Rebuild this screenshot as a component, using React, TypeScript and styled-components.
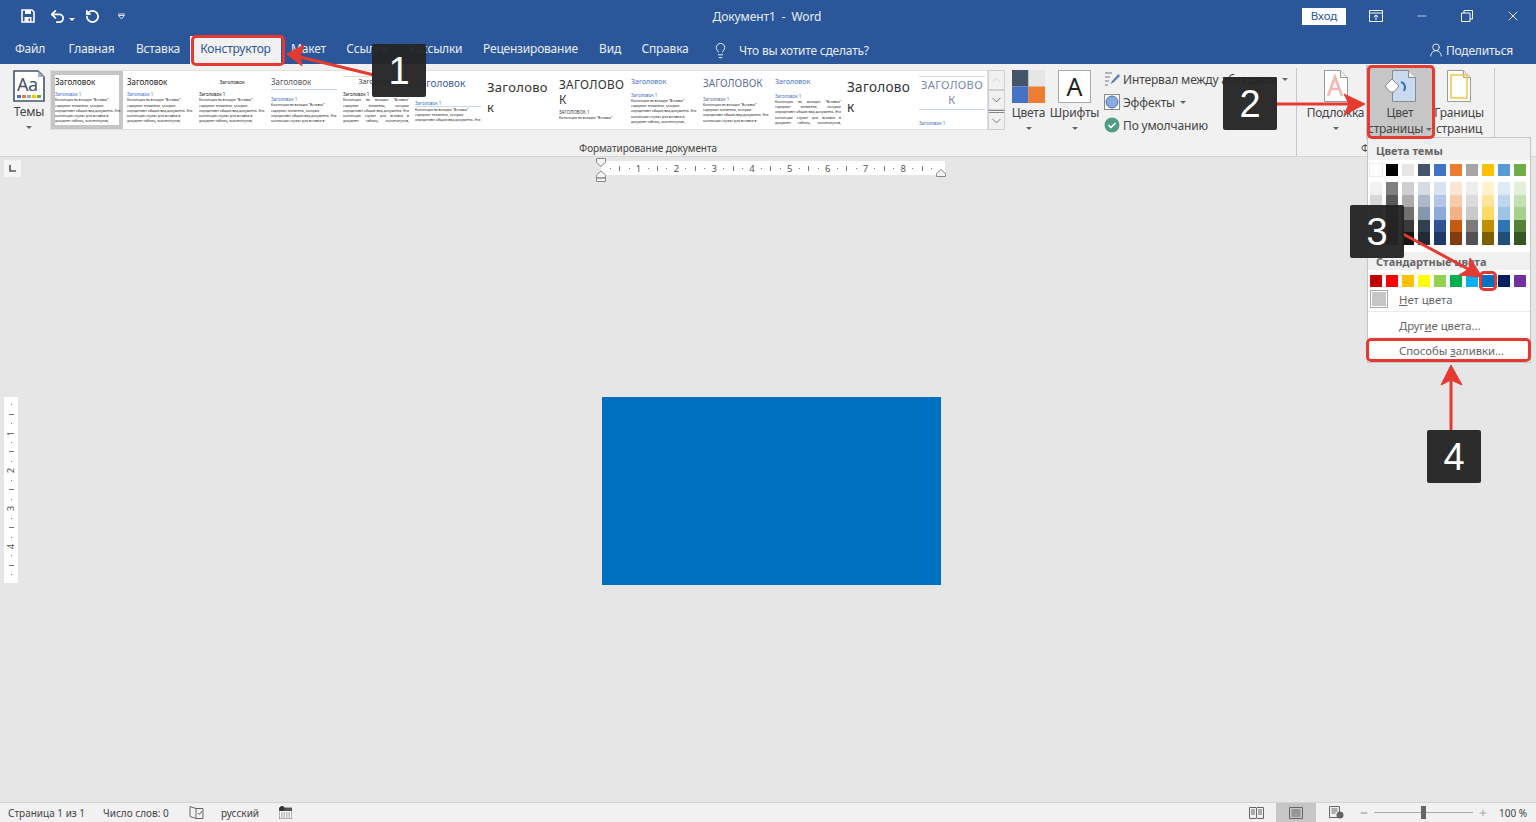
import styled, { createGlobalStyle } from "styled-components";
import { Undo2, RotateCcw, Lightbulb, UserRound, Minus, Plus, X, ChevronUp, ChevronDown } from "lucide-react";

const Global = createGlobalStyle`
  html, body { margin: 0; padding: 0; height: 100%; overflow: hidden; }
  body { font-family: "Noto Sans", "Open Sans", sans-serif; background: #e6e6e6; }
  #root { height: 100%; }
`;

const TABS = [
  { name: "Файл", width: 54 },
  { name: "Главная", width: 69 },
  { name: "Вставка", width: 64 },
  { name: "Конструктор", width: 91 },
  { name: "Макет", width: 55 },
  { name: "Ссылки", width: 63 },
  { name: "Рассылки", width: 73 },
  { name: "Рецензирование", width: 117 },
  { name: "Вид", width: 42 },
  { name: "Справка", width: 68 },
];

const BODY = "Коллекция на вкладке \"Вставка\" содержит элементы, которые определяют общий вид документа. Эти коллекции служат для вставки в документ таблиц, колонтитулов, списков, титульных страниц и других";

type Card = {
  title: string;
  size: number;
  color?: string;
  align?: string;
  lineHeight?: number;
  accent?: string;
  rule?: boolean;
  head?: string;
  headColor?: string;
  headRule?: boolean;
  gap?: number;
  lines?: number;
  justify?: boolean;
  selected?: boolean;
};

const CARDS: Card[] = [
  { title: "Заголовок", size: 8, head: "Заголовок 1", headColor: "#4472c4", lines: 5, selected: true },
  { title: "Заголовок", size: 8, head: "Заголовок 1", headColor: "#4472c4", lines: 5 },
  { title: "Заголовок", size: 5, align: "center", head: "Заголовок 1", headColor: "#222", lines: 5 },
  { title: "Заголовок", size: 8, color: "#555", head: "Заголовок 1", headColor: "#4472c4", rule: true, gap: 6, lines: 4 },
  { title: "Заголовок", size: 7, align: "center", color: "#444", accent: "#cfe3bd", head: "Заголовок 1", headColor: "#222", lines: 5, justify: true },
  { title: "Заголовок", size: 10, color: "#44629c", head: "Заголовок 1", headColor: "#4472c4", headRule: true, gap: 10, lines: 3 },
  { title: "Заголовок", size: 13, color: "#333", lineHeight: 20 },
  { title: "ЗАГОЛОВОК", size: 11.8, color: "#333", head: "ЗАГОЛОВОК 1", headColor: "#333", gap: 1.5, lines: 1 },
  { title: "Заголовок", size: 7, color: "#4472c4", head: "Заголовок 1", headColor: "#4472c4", gap: 4.6, lines: 5 },
  { title: "ЗАГОЛОВОК", size: 10, color: "#5a6f94", head: "Заголовок 1", headColor: "#5a6f94", gap: 6, lines: 4 },
  { title: "Заголовок", size: 7, color: "#4472c4", head: "Заголовок 1", headColor: "#4472c4", gap: 5.6, lines: 5, justify: true },
  { title: "Заголовок", size: 13.5, color: "#333", lineHeight: 20 },
  { title: "ЗАГОЛОВОК", size: 11.2, color: "#7a8aa5", align: "center", accent: "#dcdcdc", lineHeight: 15, rule: true, head: "Заголовок 1", headColor: "#4472c4", gap: 10 },
];

const THEME = ["#ffffff", "#000000", "#e7e6e6", "#44546a", "#4472c4", "#ed7d31", "#a5a5a5", "#ffc000", "#5b9bd5", "#70ad47"];
const SHADES = [
  ["#f2f2f2", "#d9d9d9", "#bfbfbf", "#a6a6a6", "#7f7f7f"],
  ["#7f7f7f", "#595959", "#3f3f3f", "#262626", "#0d0d0d"],
  ["#d0cece", "#aeabab", "#757070", "#3a3838", "#171616"],
  ["#d6dce4", "#adb9ca", "#8496b0", "#323f4f", "#222a35"],
  ["#d9e2f3", "#b4c6e7", "#8eaadb", "#2f5496", "#1f3864"],
  ["#fbe5d5", "#f7cbac", "#f4b183", "#c55a11", "#833c0b"],
  ["#ededed", "#dbdbdb", "#c9c9c9", "#7b7b7b", "#525252"],
  ["#fff2cc", "#fee599", "#ffd965", "#bf8f00", "#7f6000"],
  ["#deeaf6", "#bdd7ee", "#9cc3e5", "#2e75b5", "#1f4e79"],
  ["#e2efd9", "#c5e0b3", "#a8d08d", "#538135", "#385623"],
];
const STANDARD = ["#c00000", "#ff0000", "#ffc000", "#ffff00", "#92d050", "#00b050", "#00b0f0", "#0070c0", "#002060", "#7030a0"];

const App = () => {
  return (
    <Window>
      <Global />
      <TitleBar>
        <QuickAccess>
          <svg width="14" height="14" viewBox="0 0 14 14">
            <path d="M1 1h10l2 2v10H1z" fill="none" stroke="#fff" strokeWidth="1.600" />
            <rect x="4" y="1" width="6" height="4" fill="#fff" />
            <rect x="3.500" y="8" width="7" height="5" fill="#fff" />
            <rect x="7.500" y="9.500" width="1.500" height="2.500" fill="#2b579a" />
          </svg>
          <UndoIcon size={17} strokeWidth={2.500} />
          <TinyCaret $color="#fff" />
          <RedoIcon size={15} strokeWidth={2.800} />
          <svg width="9" height="7" viewBox="0 0 9 7"><path d="M1 1h7M1.500 2.500h6L4.500 6z" fill="none" stroke="#d5dff0" strokeWidth="1" /></svg>
        </QuickAccess>
        <DocTitle>Документ1&nbsp; - &nbsp;Word</DocTitle>
        <SignIn>Вход</SignIn>
        <WindowIcons>
          <svg width="14" height="12" viewBox="0 0 14 12"><path d="M.5.5h13v11H.5zM.5 3h13M7 10V5M4.800 7 7 5l2.200 2" fill="none" stroke="#fff" /></svg>
          <Minus size={14} strokeWidth={1.200} />
          <svg width="12" height="12" viewBox="0 0 12 12"><path d="M.5 3h8.500v8.500H.5zM3 3V.5h8.500V9H9" fill="none" stroke="#fff" /></svg>
          <X size={16} strokeWidth={1.300} />
        </WindowIcons>
      </TitleBar>

      <TabBar>
        {TABS.map((tab) => (
          <Tab key={tab.name} $width={tab.width} $active={tab.name === "Конструктор"}>{tab.name}</Tab>
        ))}
        <TellMe>
          <Lightbulb size={17} strokeWidth={1.400} />
          <span>Что вы хотите сделать?</span>
        </TellMe>
        <Share>
          <UserRound size={16} strokeWidth={1.400} />
          <span>Поделиться</span>
        </Share>
      </TabBar>

      <Ribbon>
        <MainGroup>
          <GroupBody>
            <ThemesButton>
              <ThemeIcon>
                <svg width="32" height="32" viewBox="0 0 32 32">
                  <path d="M1 1h24l6 6v24H1z" fill="#fff" stroke="#44546a" strokeWidth="1.600" />
                  <path d="M25 1v6h6z" fill="#9fb0c8" />
                  <rect x="4" y="25" width="4" height="3" fill="#4472c4" />
                  <rect x="9" y="25" width="4" height="3" fill="#ed7d31" />
                  <rect x="14" y="25" width="4" height="3" fill="#a5a5a5" />
                  <rect x="19" y="25" width="4" height="3" fill="#ffc000" />
                  <rect x="24" y="25" width="4" height="3" fill="#70ad47" />
                </svg>
                <ThemeLetters>Aa</ThemeLetters>
              </ThemeIcon>
              <ButtonLabel>Темы</ButtonLabel>
              <TinyCaret />
            </ThemesButton>

            <Gallery>
              {CARDS.map((card, i) => (
                <StyleCard key={i} $selected={card.selected}>
                  <CardTitle
                    $size={card.size}
                    $color={card.color}
                    $align={card.align}
                    $lineHeight={card.lineHeight}
                    $accent={card.accent}
                    $rule={card.rule}
                  >
                    {card.title}
                  </CardTitle>
                  {card.head && (
                    <CardHead $color={card.headColor} $gap={card.gap} $rule={card.headRule}>{card.head}</CardHead>
                  )}
                  {card.lines && <CardBody $lines={card.lines} $justify={card.justify}>{BODY}</CardBody>}
                </StyleCard>
              ))}
            </Gallery>

            <Scroller>
              <ScrollButton $muted><ChevronUp size={18} strokeWidth={1.100} /></ScrollButton>
              <ScrollButton><ChevronDown size={18} strokeWidth={1.100} /></ScrollButton>
              <ScrollButton $more><ChevronDown size={18} strokeWidth={1.100} /></ScrollButton>
            </Scroller>

            <ColorsButton>
              <svg width="33" height="33" viewBox="0 0 33 33">
                <rect width="16.500" height="16.500" fill="#44546a" />
                <rect x="16.500" width="16.500" height="16.500" fill="#e7e6e6" />
                <rect y="16.500" width="16.500" height="16.500" fill="#4472c4" />
                <rect x="16.500" y="16.500" width="16.500" height="16.500" fill="#ed7d31" />
              </svg>
              <ButtonLabel>Цвета</ButtonLabel>
              <TinyCaret />
            </ColorsButton>

            <FontsButton>
              <FontTile>A</FontTile>
              <ButtonLabel>Шрифты</ButtonLabel>
              <TinyCaret />
            </FontsButton>

            <OptionList>
              <OptionRow>
                <svg width="16" height="16" viewBox="0 0 16 16">
                  <path d="M1 2h7M1 6h5M1 10h4M1 14h3" stroke="#777" strokeWidth="1.200" />
                  <path d="M14.500 3 8 10l-1.500 3 3-1.500L16 5z" fill="#5b7fb8" />
                </svg>
                <span>Интервал между абзацами</span>
                <TinyCaret />
              </OptionRow>
              <OptionRow>
                <svg width="16" height="16" viewBox="0 0 16 16">
                  <rect x=".5" y=".5" width="15" height="15" fill="#fff" stroke="#8a8a8a" />
                  <circle cx="8" cy="8" r="6" fill="#8eaadb" stroke="#4472c4" />
                </svg>
                <span>Эффекты</span>
                <TinyCaret />
              </OptionRow>
              <OptionRow>
                <svg width="16" height="16" viewBox="0 0 16 16">
                  <circle cx="8" cy="8" r="7.500" fill="#4f9e83" />
                  <path d="m4.500 8 2.500 2.500 4.500-4.500" fill="none" stroke="#fff" strokeWidth="1.600" />
                </svg>
                <span>По умолчанию</span>
              </OptionRow>
            </OptionList>
          </GroupBody>
          <GroupLabel>Форматирование документа</GroupLabel>
        </MainGroup>

        <BackgroundGroup>
          <GroupBody>
            <PageButton $width={61}>
              <svg width="30" height="32" viewBox="0 0 30 32">
                <path d="M3.500.5h16l7 7v24h-23z" fill="#fff" stroke="#9a9a9a" />
                <path d="M19.500.5v7h7" fill="#eee" stroke="#9a9a9a" />
                <path d="m7 26 7-19 7 19M9.500 19h9" fill="none" stroke="#f4b8b0" strokeWidth="2.600" />
              </svg>
              <PageLabel>Подложка</PageLabel>
              <TinyCaret />
            </PageButton>
            <PageButton $width={68} $active>
              <svg width="34" height="32" viewBox="0 0 34 32">
                <path d="M9.500.5h16l7 7v24h-23z" fill="#c9d9ee" stroke="#8a8a8a" />
                <path d="M25.500.5v7h7" fill="#eee" stroke="#8a8a8a" />
                <path d="m2 16 7-7 7 7-5 6H7z" fill="#fff" stroke="#8a8a8a" />
                <path d="M18 12c4 1 5 5 3 9" fill="none" stroke="#2f6db5" strokeWidth="2" />
              </svg>
              <PageLabel>Цвет</PageLabel>
              <PageLabel>страницы<TinyCaret /></PageLabel>
            </PageButton>
            <PageButton $width={50}>
              <svg width="30" height="32" viewBox="0 0 30 32">
                <path d="M3.500.5h16l7 7v24h-23z" fill="#fff" stroke="#9a9a9a" />
                <path d="M19.500.5v7h7" fill="#eee" stroke="#9a9a9a" />
                <rect x="7" y="5" width="16" height="23" fill="none" stroke="#f5c75a" strokeWidth="1.600" />
              </svg>
              <PageLabel>Границы</PageLabel>
              <PageLabel>страниц</PageLabel>
            </PageButton>
          </GroupBody>
          <GroupLabel>Фон страницы</GroupLabel>
        </BackgroundGroup>
      </Ribbon>

      <DocArea>
        <RulerRow>
          <CornerTab>
            <svg width="7" height="7" viewBox="0 0 7 7"><path d="M1 0v6h6" fill="none" stroke="#555" strokeWidth="1.600" /></svg>
          </CornerTab>
          <HRuler>
            {Array.from({ length: 36 }, (_, k) => (
              <RulerCell key={k}>
                {k === 0 ? null : k % 4 === 0 ? k / 4 : k % 4 === 2 ? <TickV /> : <Dot />}
              </RulerCell>
            ))}
            <IndentMarks width="12" height="24" viewBox="0 0 12 24">
              <path d="M1.500 .5h9v4l-4.500 4-4.500-4z" fill="#f4f4f4" stroke="#888" />
              <path d="M6 13l4.500 4v3h-9v-3zM1.500 20h9v3.500h-9z" fill="#f4f4f4" stroke="#888" />
            </IndentMarks>
            <RightMark width="12" height="8" viewBox="0 0 12 8">
              <path d="M6 .5l4.500 4v3h-9v-3z" fill="#f4f4f4" stroke="#888" />
            </RightMark>
          </HRuler>
        </RulerRow>
        <SheetRow>
          <VRuler>
            {Array.from({ length: 20 }, (_, k) => (
              <VRulerCell key={k}>
                {k === 0 ? null : k % 4 === 0 ? <VNumber>{k / 4}</VNumber> : k % 4 === 2 ? <TickH /> : <Dot />}
              </VRulerCell>
            ))}
          </VRuler>
          <Sheet />
        </SheetRow>
      </DocArea>

      <StatusBar>
        <StatusText $width={95}>Страница 1 из 1</StatusText>
        <StatusText $width={86}>Число слов: 0</StatusText>
        <svg width="15" height="13" viewBox="0 0 15 13"><path d="M7 2.500 1 .5v10l6 2h7V2.500zM7 2.500v10" fill="none" stroke="#666" /><path d="m9 7 1.500 1.500L13 5" fill="none" stroke="#666" /></svg>
        <StatusText $width={75} $pad={17}>русский</StatusText>
        <svg width="13" height="13" viewBox="0 0 13 13"><rect y="2" width="13" height="11" fill="#fff" stroke="#666" /><rect y="2" width="13" height="3" fill="#555" /><circle cx="3" cy="2.500" r="2.500" fill="#333" /><path d="M2 7h9M2 9h9M2 11h9" stroke="#777" strokeDasharray="1.500 1" /></svg>
        <StatusRight>
          <ViewSlot>
            <svg width="15" height="12" viewBox="0 0 15 12"><path d="M.5.5h6.500l.5 1 .5-1h6.500v11H8l-.5-.5-.5.500H.5zM7.500 1.500V11M2 3h4M2 5h4M2 7h4M9 3h4M9 5h4M9 7h4" fill="none" stroke="#666" /></svg>
          </ViewSlot>
          <ViewSlot $active>
            <svg width="14" height="12" viewBox="0 0 14 12"><path d="M.5.5h13v11H.5zM2.500 3h9M2.500 5h9M2.500 7h9M2.500 9h9" fill="none" stroke="#666" /></svg>
          </ViewSlot>
          <ViewSlot>
            <svg width="15" height="13" viewBox="0 0 15 13"><path d="M.5.5h10v11H.5zM2.500 3h6M2.500 5h6M2.500 7h4" fill="none" stroke="#666" /><circle cx="11" cy="9" r="3.500" fill="#666" /></svg>
          </ViewSlot>
          <Zoom>
            <Minus size={10} strokeWidth={2} color="#777" />
            <ZoomTrack><ZoomThumb /></ZoomTrack>
            <Plus size={10} strokeWidth={1.400} color="#777" />
          </Zoom>
          <ZoomValue>100 %</ZoomValue>
        </StatusRight>
      </StatusBar>

      <ColorMenu>
        <MenuHeader>Цвета темы</MenuHeader>
        <SwatchRow $top={4}>
          {THEME.map((color) => <Swatch key={color} $color={color} />)}
        </SwatchRow>
        <ShadeGrid>
          {SHADES.map((col, i) => (
            <ShadeColumn key={i}>
              {col.map((color, j) => <Shade key={j} $color={color} />)}
            </ShadeColumn>
          ))}
        </ShadeGrid>
        <MenuSubHeader>Стандартные цвета</MenuSubHeader>
        <SwatchRow $top={5}>
          {STANDARD.map((color) => <Swatch key={color} $color={color} />)}
        </SwatchRow>
        <NoColorRow>
          <NoColorBox />
          <MenuText><u>Н</u>ет цвета</MenuText>
        </NoColorRow>
        <MenuItem><MenuText>Друг<u>и</u>е цвета...</MenuText></MenuItem>
        <MenuItem $last><MenuText>Способы <u>з</u>аливки...</MenuText></MenuItem>
      </ColorMenu>

      <Marker $x={191} $y={35} $w={94} $h={31} />
      <Marker $x={1367} $y={65} $w={68} $h={74} />
      <Marker $x={1479} $y={271} $w={18} $h={20} />
      <Marker $x={1366} $y={338} $w={165} $h={24} />

      <Arrows width="1536" height="822" viewBox="0 0 1536 822">
        <g stroke="#e53a32" strokeWidth="3" fill="#e53a32">
          <path d="M374 75 300 57" />
          <path d="M287 54 304 45 300 57 302 66z" strokeWidth="1" />
          <path d="M1277 104H1350" />
          <path d="M1365 104 1344 94 1349 104 1344 115z" strokeWidth="1" />
          <path d="M1403 234 1470 270" />
          <path d="M1482 277 1459 275 1469 269 1470 258z" strokeWidth="1" />
          <path d="M1451 430 1451 380" />
          <path d="M1451 365 1441 385 1451 380 1462 385z" strokeWidth="1" />
        </g>
      </Arrows>

      <Callout $x={372} $y={44}>1</Callout>
      <Callout $x={1223} $y={77}>2</Callout>
      <Callout $x={1350} $y={205}>3</Callout>
      <Callout $x={1427} $y={430}>4</Callout>
    </Window>
  );
};

export default App;

const Window = styled.div`
  position: relative;
  display: flex;
  flex-direction: column;
  width: 1536px;
  height: 822px;
  overflow: hidden;
  background: #e6e6e6;
  color: #444;
`;

const TitleBar = styled.div`
  display: flex;
  align-items: center;
  height: 32px;
  background: #2b579a;
  color: #fff;
`;

const QuickAccess = styled.div`
  display: flex;
  align-items: center;
  width: 300px;
  padding-left: 21px;
  box-sizing: border-box;
`;

const UndoIcon = styled(Undo2)`
  margin: 0 3px 0 14px;
`;

const RedoIcon = styled(RotateCcw)`
  margin: 0 17px 0 10px;
`;

const DocTitle = styled.div`
  width: 934px;
  text-align: center;
  font-size: 12px;
  letter-spacing: -0.1px;
  color: #e8edf5;
`;

const SignIn = styled.div`
  width: 44px;
  height: 17px;
  margin-left: 68px;
  line-height: 16px;
  text-align: center;
  background: #fff;
  color: #2b579a;
  font-size: 11.500px;
`;

const WindowIcons = styled.div`
  display: flex;
  align-items: center;
  justify-content: space-between;
  width: 152px;
  margin-left: 23px;
`;

const TabBar = styled.div`
  display: flex;
  align-items: flex-end;
  height: 32px;
  padding-left: 3px;
  background: #2b579a;
`;

const Tab = styled.div<{ $width: number; $active?: boolean }>`
  flex: none;
  width: ${(p) => p.$width}px;
  height: 28px;
  line-height: 26px;
  text-align: center;
  font-size: 12px;
  letter-spacing: -0.2px;
  white-space: nowrap;
  color: ${(p) => (p.$active ? "#2b579a" : "#e8edf5")};
  background: ${(p) => (p.$active ? "#f1f1f1" : "transparent")};
`;

const TellMe = styled.div`
  display: flex;
  align-items: center;
  gap: 10px;
  height: 28px;
  margin-left: 13px;
  font-size: 12px;
  letter-spacing: -0.22px;
  color: #e8edf5;
`;

const Share = styled.div`
  display: flex;
  align-items: center;
  gap: 2px;
  height: 28px;
  margin-left: auto;
  padding-right: 23px;
  font-size: 12px;
  letter-spacing: -0.2px;
  color: #e8edf5;
`;

const Ribbon = styled.div`
  display: flex;
  flex: none;
  height: 93px;
  background: #f1f1f1;
  border-bottom: 1px solid #d4d4d4;
  box-sizing: border-box;
`;

const MainGroup = styled.div`
  display: flex;
  flex-direction: column;
  width: 1297px;
  border-right: 1px solid #c8c8c8;
  margin: 4px 0 0;
  box-sizing: border-box;
`;

const BackgroundGroup = styled(MainGroup)`
  width: 198px;
`;

const GroupBody = styled.div`
  display: flex;
  flex: 1;
  min-height: 0;
`;

const GroupLabel = styled.div`
  height: 15px;
  line-height: 15px;
  text-align: center;
  font-size: 10px;
  letter-spacing: -0.08px;
  color: #444;
`;

const ThemesButton = styled.div`
  display: flex;
  flex-direction: column;
  align-items: center;
  width: 32px;
  margin: 2px 5px 0 13px;
`;

const ThemeIcon = styled.div`
  position: relative;
  height: 32px;
`;

const ThemeLetters = styled.span`
  position: absolute;
  left: 4px;
  top: 4px;
  font-size: 18px;
  line-height: 20px;
  letter-spacing: -0.5px;
  color: #44546a;
`;

const ButtonLabel = styled.div`
  margin-top: 1px;
  font-size: 12px;
  line-height: 17px;
  letter-spacing: -0.2px;
  white-space: nowrap;
  color: #444;
`;

const TinyCaret = styled.i<{ $color?: string }>`
  display: inline-block;
  flex: none;
  width: 0;
  height: 0;
  margin: 6px 0 0;
  border-style: solid;
  border-width: 3px 3px 0;
  border-color: ${(p) => p.$color ?? "#666"} transparent transparent;
  vertical-align: middle;
`;

const Gallery = styled.div`
  display: grid;
  grid-template-columns: repeat(13, 72px);
  width: 938px;
  height: 60px;
  margin-top: 2px;
  background: #fff;
  border: 1px solid #e0e0e0;
  box-sizing: border-box;
  overflow: hidden;
`;

const StyleCard = styled.div<{ $selected?: boolean }>`
  height: 58px;
  box-sizing: border-box;
  overflow: hidden;
  padding: 6px 2px 0 4px;
  box-shadow: ${(p) => (p.$selected ? "inset 0 0 0 4px #c6c6c6" : "none")};
`;

const CardTitle = styled.div<{ $size: number; $color?: string; $align?: string; $lineHeight?: number; $accent?: string; $rule?: boolean }>`
  font-size: ${(p) => p.$size}px;
  line-height: ${(p) => p.$lineHeight ?? Math.max(p.$size * 1.3, 10.4)}px;
  color: ${(p) => p.$color ?? "#222"};
  text-align: ${(p) => p.$align ?? "left"};
  letter-spacing: ${(p) => (p.$size > 11 ? "0.3px" : "0")};
  word-break: break-all;
  box-shadow: ${(p) => (p.$accent ? `0 -1px 0 ${p.$accent}` : "none")};
  padding-bottom: ${(p) => (p.$rule ? "2px" : "0")};
  border-bottom: ${(p) => (p.$rule ? "1px solid #c9d6ea" : "0")};
`;

const CardHead = styled.div<{ $color?: string; $gap?: number; $rule?: boolean }>`
  margin-top: ${(p) => p.$gap ?? 4}px;
  font-size: 4.500px;
  line-height: 6px;
  color: ${(p) => p.$color ?? "#4472c4"};
  border-bottom: ${(p) => (p.$rule ? "1px solid #c9d6ea" : "0")};
`;

const CardBody = styled.div<{ $lines: number; $justify?: boolean }>`
  height: ${(p) => p.$lines * 5.2}px;
  overflow: hidden;
  font-size: 3.400px;
  line-height: 5.200px;
  color: #222;
  text-align: ${(p) => (p.$justify ? "justify" : "left")};
`;

const Scroller = styled.div`
  display: flex;
  flex-direction: column;
  width: 17px;
  height: 60px;
  margin: 2px 7px 0 0;
`;

const ScrollButton = styled.div<{ $muted?: boolean; $more?: boolean }>`
  display: flex;
  align-items: center;
  justify-content: center;
  height: 20px;
  box-sizing: border-box;
  color: ${(p) => (p.$muted ? "#c4c4c4" : "#444")};
  border: 1px solid #cfcfcf;
  border-top: ${(p) => (p.$more ? "3px double #888" : "1px solid #cfcfcf")};
`;

const ColorsButton = styled.div`
  display: flex;
  flex-direction: column;
  align-items: center;
  width: 33px;
  margin: 2px 13px 0 0;
`;

const FontsButton = styled(ColorsButton)``;

const FontTile = styled.div`
  width: 33px;
  height: 33px;
  box-sizing: border-box;
  text-align: center;
  font-size: 25px;
  line-height: 30px;
  background: #fff;
  border: 1px solid #aaa;
  color: #222;
`;

const OptionList = styled.div`
  display: flex;
  flex-direction: column;
  gap: 3px;
  padding-top: 1px;
`;

const OptionRow = styled.div`
  display: flex;
  align-items: center;
  gap: 3px;
  height: 20px;
  font-size: 12px;
  letter-spacing: -0.15px;
  white-space: nowrap;
  color: #444;
  i { margin: 0 0 0 2px; }
`;

const PageButton = styled.div<{ $width: number; $active?: boolean }>`
  display: flex;
  flex-direction: column;
  align-items: center;
  flex: none;
  width: ${(p) => p.$width}px;
  height: 74px;
  margin-top: -3px;
  padding-top: 5px;
  box-sizing: border-box;
  background: ${(p) => (p.$active ? "#c6c6c6" : "transparent")};
  &:first-child { margin-left: 8px; }
`;

const PageLabel = styled.div`
  font-size: 12px;
  line-height: 16px;
  letter-spacing: -0.2px;
  white-space: nowrap;
  color: #444;
  &:first-of-type { margin-top: 3px; }
  i { margin: 0 0 0 3px; }
`;

const DocArea = styled.div`
  flex: 1;
  display: flex;
  flex-direction: column;
  background: #e6e6e6;
`;

const RulerRow = styled.div`
  display: flex;
  align-items: flex-start;
  padding: 3px 0 0 4px;
`;

const CornerTab = styled.div`
  display: flex;
  align-items: center;
  justify-content: center;
  width: 17px;
  height: 17px;
  background: #f5f5f5;
`;

const HRuler = styled.div`
  position: relative;
  display: flex;
  width: 344px;
  height: 14px;
  margin: 1px 0 0 580px;
  background: #fff;
`;

const RulerCell = styled.div`
  display: flex;
  align-items: center;
  justify-content: center;
  flex: none;
  width: 9.460px;
  height: 14px;
  font-size: 9.500px;
  color: #555;
  &:first-child { width: 4.500px; }
`;

const Dot = styled.i`
  display: block;
  width: 1px;
  height: 1px;
  background: #777;
`;

const TickV = styled.i`
  display: block;
  width: 1px;
  height: 5px;
  background: #777;
`;

const TickH = styled.i`
  display: block;
  width: 5px;
  height: 1px;
  background: #777;
`;

const IndentMarks = styled.svg`
  position: absolute;
  left: -6px;
  top: -3px;
`;

const RightMark = styled.svg`
  position: absolute;
  left: 334px;
  top: 8px;
`;

const SheetRow = styled.div`
  display: flex;
  margin-top: 220px;
  padding-left: 4px;
`;

const VRuler = styled.div`
  display: flex;
  flex-direction: column;
  width: 14px;
  height: 186px;
  background: #fff;
`;

const VRulerCell = styled.div`
  display: flex;
  align-items: center;
  justify-content: center;
  flex: none;
  height: 9.460px;
  font-size: 9.500px;
  color: #555;
  &:first-child { height: 3px; }
`;

const VNumber = styled.span`
  transform: rotate(-90deg);
`;

const Sheet = styled.div`
  width: 339px;
  height: 188px;
  margin-left: 584px;
  background: #0070c0;
`;

const StatusBar = styled.div`
  display: flex;
  align-items: center;
  flex: none;
  height: 20px;
  padding-left: 8px;
  background: #f1f1f1;
  border-top: 1px solid #d4d4d4;
  box-sizing: border-box;
`;

const StatusText = styled.div<{ $width: number; $pad?: number }>`
  flex: none;
  box-sizing: border-box;
  width: ${(p) => p.$width}px;
  padding-left: ${(p) => p.$pad ?? 0}px;
  font-size: 10px;
  white-space: nowrap;
  color: #444;
`;

const StatusRight = styled.div`
  display: flex;
  align-items: center;
  height: 100%;
  margin-left: auto;
`;

const ViewSlot = styled.div<{ $active?: boolean }>`
  display: flex;
  align-items: center;
  justify-content: center;
  width: 40px;
  height: 100%;
  background: ${(p) => (p.$active ? "#c6c6c6" : "transparent")};
`;

const Zoom = styled.div`
  display: flex;
  align-items: center;
  gap: 5px;
  margin-left: 3px;
`;

const ZoomTrack = styled.div`
  position: relative;
  width: 99px;
  height: 1px;
  background: #aaa;
`;

const ZoomThumb = styled.i`
  position: absolute;
  left: 47px;
  top: -6px;
  width: 5px;
  height: 13px;
  background: #666;
`;

const ZoomValue = styled.div`
  width: 37px;
  margin-left: 11px;
  font-size: 10px;
  white-space: nowrap;
  color: #444;
`;

const ColorMenu = styled.div`
  position: absolute;
  left: 1367px;
  top: 137px;
  width: 164px;
  height: 226px;
  box-sizing: border-box;
  background: #fff;
  border: 1px solid #c6c6c6;
  display: flex;
  flex-direction: column;
`;

const MenuHeader = styled.div`
  height: 22px;
  line-height: 25px;
  padding-left: 8px;
  font-size: 11px;
  font-weight: 700;
  color: #666;
  background: #f0f0f0;
`;

const MenuSubHeader = styled(MenuHeader)`
  height: 18px;
  margin-top: 7px;
  line-height: 20px;
`;

const SwatchRow = styled.div<{ $top: number }>`
  display: flex;
  gap: 4px;
  margin-top: ${(p) => p.$top}px;
  padding-left: 2px;
`;

const Swatch = styled.div<{ $color: string }>`
  flex: none;
  width: 12px;
  height: 12px;
  background: ${(p) => p.$color};
  box-shadow: ${(p) => (p.$color === "#ffffff" ? "0 0 0 1px #ececec" : "none")};
`;

const ShadeGrid = styled.div`
  display: flex;
  gap: 4px;
  margin-top: 6px;
  padding-left: 2px;
`;

const ShadeColumn = styled.div`
  display: flex;
  flex-direction: column;
`;

const Shade = styled.div<{ $color: string }>`
  width: 12px;
  height: 12.600px;
  background: ${(p) => p.$color};
`;

const NoColorRow = styled.div`
  display: flex;
  align-items: center;
  gap: 11px;
  height: 24px;
  margin-top: 1px;
  padding-left: 2px;
  border-bottom: 1px solid #ececec;
`;

const NoColorBox = styled.div`
  width: 16px;
  height: 16px;
  background: #c6c6c6;
  border: 1px solid #a8a8a8;
  box-shadow: inset 0 0 0 1px #fff;
`;

const MenuText = styled.span`
  font-size: 11.300px;
  color: #666;
`;

const MenuItem = styled.div<{ $last?: boolean }>`
  height: 25px;
  line-height: ${(p) => (p.$last ? "23px" : "25px")};
  padding-left: 31px;
  border-bottom: ${(p) => (p.$last ? "0" : "1px solid #ececec")};
  white-space: nowrap;
`;

const Marker = styled.div<{ $x: number; $y: number; $w: number; $h: number }>`
  position: absolute;
  left: ${(p) => p.$x}px;
  top: ${(p) => p.$y}px;
  width: ${(p) => p.$w}px;
  height: ${(p) => p.$h}px;
  box-sizing: border-box;
  border: 3.500px solid #e53a32;
  border-radius: 5px;
`;

const Arrows = styled.svg`
  position: absolute;
  left: 0;
  top: 0;
  pointer-events: none;
`;

const Callout = styled.div<{ $x: number; $y: number }>`
  position: absolute;
  left: ${(p) => p.$x}px;
  top: ${(p) => p.$y}px;
  width: 54px;
  height: 53px;
  line-height: 54px;
  text-align: center;
  font-family: "Liberation Sans", Arial, sans-serif;
  font-size: 38px;
  color: #fff;
  background: rgba(36, 36, 36, 0.96);
  border-radius: 2px;
`;
